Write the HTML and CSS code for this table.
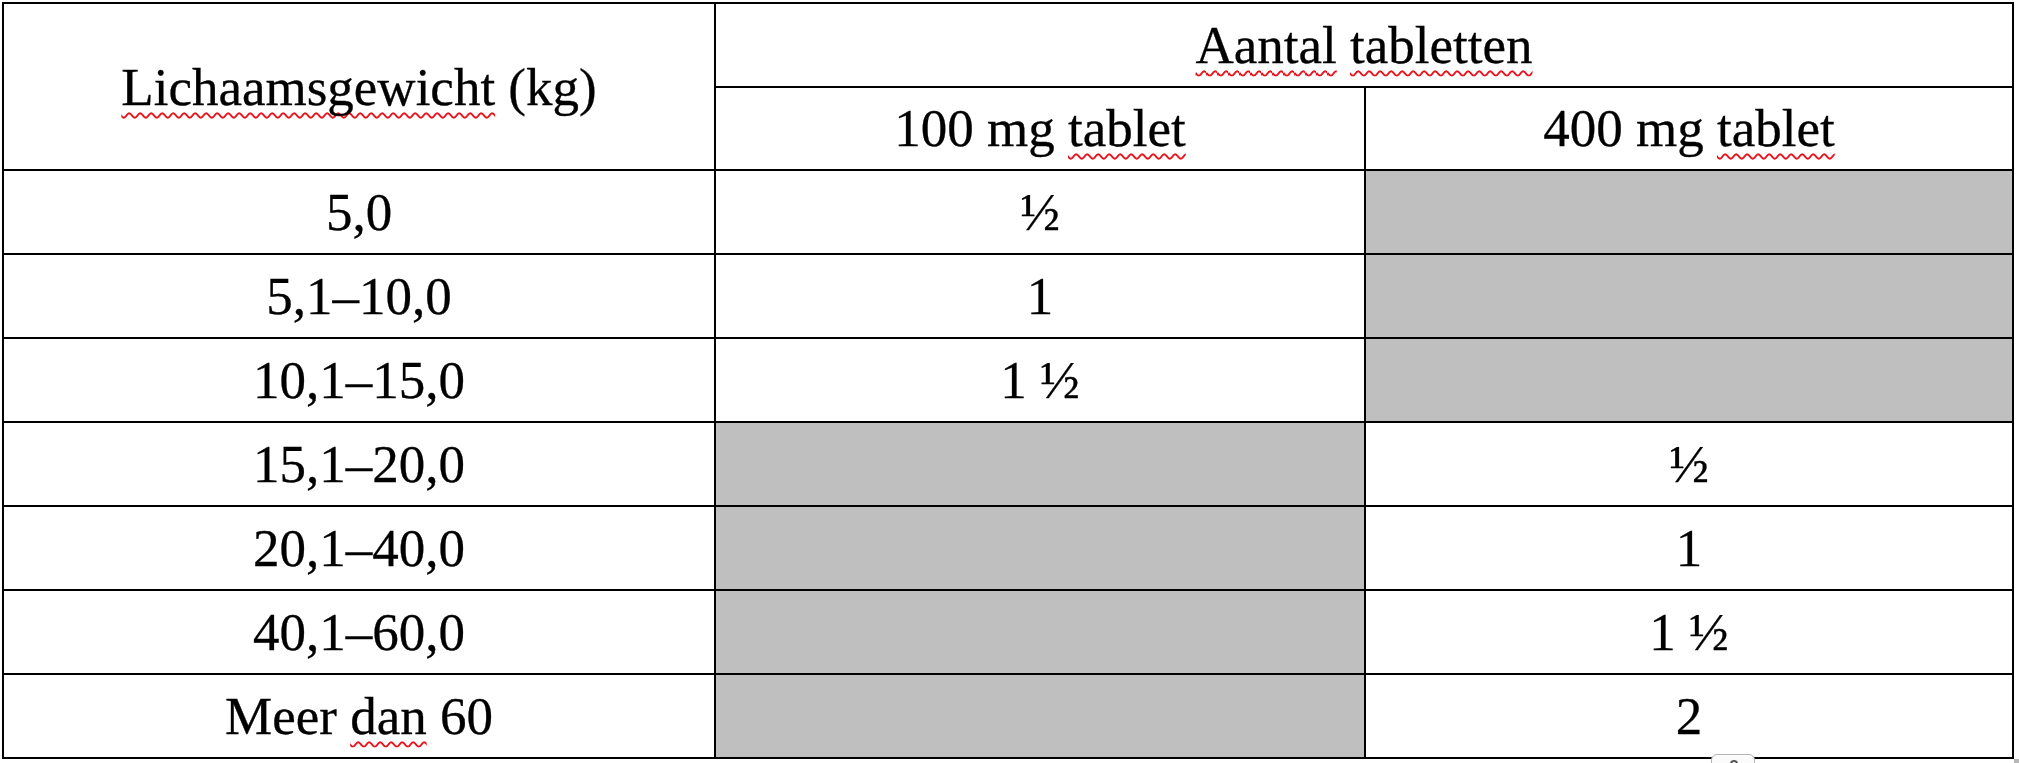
FILE: index.html
```html
<!DOCTYPE html>
<html lang="nl">
<head>
<meta charset="utf-8">
<title>Aantal tabletten</title>
<link rel="stylesheet" href="styles.css">
</head>
<body>
<div class="page">
  <table class="dose">
    <colgroup>
      <col class="c1">
      <col class="c2">
      <col class="c3">
    </colgroup>
    <tr class="r1">
      <td rowspan="2" class="head"><span class="sp">Lichaamsgewicht</span> (kg)</td>
      <td colspan="2"><span class="sp">Aantal</span> <span class="sp">tabletten</span></td>
    </tr>
    <tr class="r2">
      <td>100 mg <span class="sp">tablet</span></td>
      <td>400 mg <span class="sp">tablet</span></td>
    </tr>
    <tr>
      <td>5,0</td>
      <td>½</td>
      <td class="grey"></td>
    </tr>
    <tr>
      <td>5,1–10,0</td>
      <td>1</td>
      <td class="grey"></td>
    </tr>
    <tr>
      <td>10,1–15,0</td>
      <td>1 ½</td>
      <td class="grey"></td>
    </tr>
    <tr>
      <td>15,1–20,0</td>
      <td class="grey"></td>
      <td>½</td>
    </tr>
    <tr>
      <td>20,1–40,0</td>
      <td class="grey"></td>
      <td>1</td>
    </tr>
    <tr>
      <td>40,1–60,0</td>
      <td class="grey"></td>
      <td>1 ½</td>
    </tr>
    <tr>
      <td>Meer <span class="sp">dan</span> 60</td>
      <td class="grey"></td>
      <td>2</td>
    </tr>
  </table>
  <div class="tab"><span class="tab-mark"></span></div>
  <div class="corner"></div>
</div>
</body>
</html>
```

FILE: styles.css
```css
html, body {
  margin: 0;
  padding: 0;
  background: #ffffff;
}

.page {
  position: relative;
  width: 2019px;
  height: 763px;
  overflow: hidden;
  padding: 2px 0 0 2px;
  box-sizing: border-box;
}

.dose {
  border-collapse: separate;
  border-spacing: 0;
  table-layout: fixed;
  width: 2012px;
  border-top: 2px solid #000;
  border-left: 2px solid #000;
  font-family: "Liberation Serif", "Times New Roman", serif;
  font-size: 53px;
  color: #000;
  -webkit-text-stroke: 0.3px #000;
}

.c1 { width: 712px; }
.c2 { width: 650px; }
.c3 { width: 648px; }

.dose td {
  box-sizing: border-box;
  height: 84px;
  padding: 0;
  border-right: 2px solid #000;
  border-bottom: 2px solid #000;
  text-align: center;
  vertical-align: middle;
  white-space: nowrap;
  line-height: 1.15;
}

.dose .r2 td {
  height: 83px;
}

.dose td.head {
  padding-top: 2px;
}

.dose td.grey {
  background: #bfbfbf;
}

.sp {
  text-decoration-line: underline;
  text-decoration-style: wavy;
  text-decoration-color: #e8131c;
  text-decoration-thickness: 2px;
  text-decoration-skip-ink: none;
  text-underline-offset: 7px;
}

.tab {
  position: absolute;
  left: 1711px;
  top: 754px;
  width: 44px;
  height: 16px;
  border: 1px solid #b4b4b4;
  border-radius: 6px;
  background: #fbfbfb;
  box-sizing: border-box;
}

.tab-mark {
  position: absolute;
  left: 18px;
  top: 5px;
  width: 8px;
  height: 8px;
  border: 2px solid #555;
  border-radius: 50%;
  box-sizing: border-box;
}

.corner {
  position: absolute;
  left: 2014px;
  top: 759px;
  width: 5px;
  height: 4px;
  background: #b8b8b8;
}
```
